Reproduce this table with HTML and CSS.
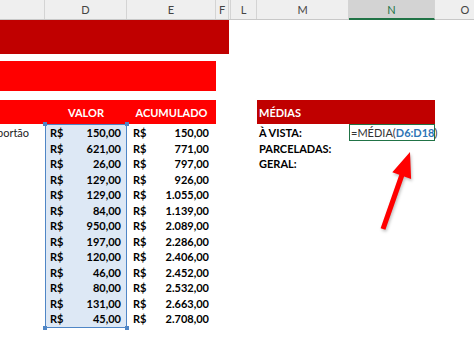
FILE: index.html
```html
<!DOCTYPE html>
<html lang="pt-BR">
<head>
<meta charset="utf-8">
<title>Planilha</title>
<link rel="stylesheet" href="styles.css">
</head>
<body>
<div class="sheet">
  <div class="colheads">
    <div class="ch w-c"></div>
    <div class="ch w-d">D</div>
    <div class="ch w-e">E</div>
    <div class="ch w-f">F</div>
    <div class="ch w-hid"></div>
    <div class="ch w-l">L</div>
    <div class="ch w-m">M</div>
    <div class="ch w-n active">N</div>
    <div class="ch w-o">O</div>
  </div>
  <div class="body">
    <div class="left">
      <div class="bar1"></div>
      <div class="bar2"></div>
      <div class="thead">
        <div class="w-c"></div>
        <div class="w-d th">VALOR</div>
        <div class="w-e th">ACUMULADO</div>
      </div>
      <div class="data">
        <div class="col colc">
          <div class="cell txt">portão</div>
        </div>
        <div class="col cold">
          <div class="cell money"><span>R$</span><span>150,00</span></div>
          <div class="cell money"><span>R$</span><span>621,00</span></div>
          <div class="cell money"><span>R$</span><span>26,00</span></div>
          <div class="cell money"><span>R$</span><span>129,00</span></div>
          <div class="cell money"><span>R$</span><span>129,00</span></div>
          <div class="cell money"><span>R$</span><span>84,00</span></div>
          <div class="cell money"><span>R$</span><span>950,00</span></div>
          <div class="cell money"><span>R$</span><span>197,00</span></div>
          <div class="cell money"><span>R$</span><span>120,00</span></div>
          <div class="cell money"><span>R$</span><span>46,00</span></div>
          <div class="cell money"><span>R$</span><span>80,00</span></div>
          <div class="cell money"><span>R$</span><span>131,00</span></div>
          <div class="cell money"><span>R$</span><span>45,00</span></div>
          <span class="handle tl"></span><span class="handle tr"></span>
          <span class="handle bl"></span><span class="handle br"></span>
        </div>
        <div class="col cole">
          <div class="cell money"><span>R$</span><span>150,00</span></div>
          <div class="cell money"><span>R$</span><span>771,00</span></div>
          <div class="cell money"><span>R$</span><span>797,00</span></div>
          <div class="cell money"><span>R$</span><span>926,00</span></div>
          <div class="cell money"><span>R$</span><span>1.055,00</span></div>
          <div class="cell money"><span>R$</span><span>1.139,00</span></div>
          <div class="cell money"><span>R$</span><span>2.089,00</span></div>
          <div class="cell money"><span>R$</span><span>2.286,00</span></div>
          <div class="cell money"><span>R$</span><span>2.406,00</span></div>
          <div class="cell money"><span>R$</span><span>2.452,00</span></div>
          <div class="cell money"><span>R$</span><span>2.532,00</span></div>
          <div class="cell money"><span>R$</span><span>2.663,00</span></div>
          <div class="cell money"><span>R$</span><span>2.708,00</span></div>
        </div>
      </div>
    </div>
    <div class="right">
      <div class="mhead">MÉDIAS</div>
      <div class="rrow">
        <div class="lbl">À VISTA:</div>
        <div class="fcell">=MÉDIA(<b>D6:D18</b>)</div>
      </div>
      <div class="rrow"><div class="lbl">PARCELADAS:</div></div>
      <div class="rrow"><div class="lbl">GERAL:</div></div>
    </div>
  </div>
  <svg class="arrow" width="474" height="349" viewBox="0 0 474 349">
    <polygon points="380.6,228.2 385.4,229.8 404.1,176.4 411.1,178.9 410,152 392.3,172.3 399.3,174.8" fill="#ff0000"/>
  </svg>
</div>
</body>
</html>
```

FILE: styles.css
```css
* { box-sizing: border-box; }
html, body { margin: 0; padding: 0; background: #ffffff; }
body {
  font-family: Lato, "Liberation Sans", sans-serif;
  font-size: 11px;
  color: #000;
  width: 474px;
  height: 349px;
  overflow: hidden;
}
.sheet { position: relative; width: 474px; height: 349px; overflow: hidden; }

.colheads {
  display: flex;
  height: 20px;
  background: #efefef;
  border-bottom: 1px solid #c8c8c8;
}
.ch {
  flex: none;
  height: 19px;
  line-height: 20px;
  text-align: center;
  color: #444;
  font-size: 11px;
  border-right: 1px solid #d4d4d4;
}
.w-c { width: 45px; flex: none; }
.w-d { width: 82px; flex: none; }
.w-e { width: 89px; flex: none; }
.w-f { width: 13px; }
.w-hid { width: 2px; }
.w-l { width: 26px; }
.w-m { width: 92px; }
.w-n { width: 86px; }
.w-o { width: 60px; border-right: none; }
.ch.active {
  background: #d3d3d3;
  color: #217346;
  border-bottom: 2px solid #217346;
  height: 20px;
}

.body { display: flex; }
.left { width: 229px; flex: none; }
.bar1 { height: 34px; width: 229px; background: #c00000; }
.bar2 { height: 30px; width: 216px; background: #ff0000; margin-top: 7px; }
.thead {
  display: flex;
  height: 24px;
  width: 216px;
  margin-top: 9px;
  background: #ff0000;
}
.th {
  color: #fff;
  font-weight: bold;
  text-align: center;
  line-height: 26px;
  font-size: 11px;
}

.data { display: flex; height: 204px; }
.col {
  display: flex;
  flex-direction: column;
  padding: 1px 0;
}
.colc { width: 45px; overflow: hidden; }
.cold {
  width: 82px;
  position: relative;
  background: #dde8f5;
  border: 1px solid #4f86c6;
  padding: 0;
}
.cole { width: 89px; }
.cell {
  height: 15.54px;
  line-height: 16px;
  white-space: nowrap;
}
.txt { margin-left: -3px; color: #222; }
.money {
  display: flex;
  justify-content: space-between;
  font-weight: bold;
}
.cold .money { padding: 0 5px 0 4px; }
.cole .money { padding: 0 7px 0 6px; }

.handle {
  position: absolute;
  width: 4px;
  height: 4px;
  background: #4f86c6;
}
.tl { left: -3px; top: -3px; }
.tr { right: -3px; top: -3px; }
.bl { left: -3px; bottom: -3px; }
.br { right: -3px; bottom: -3px; }

.right { margin-left: 28px; margin-top: 80px; width: 178px; }
.mhead {
  height: 24px;
  background: #c00000;
  color: #fff;
  font-weight: bold;
  padding-left: 2px;
  line-height: 26px;
}
.rrow {
  display: flex;
  height: 15.54px;
  line-height: 16px;
}
.rrow:first-of-type { margin-top: 1px; }
.mhead + .rrow { margin-top: 1px; }
.lbl { width: 92px; flex: none; font-weight: bold; padding-left: 2px; }
.fcell {
  width: 86px;
  flex: none;
  height: 17px;
  margin-top: -1px;
  border: 1px solid #217346;
  padding-left: 1px;
  line-height: 15px;
  white-space: nowrap;
  color: #333;
  overflow: visible;
}
.fcell b { color: #2e75b6; font-weight: bold; }

.arrow {
  position: absolute;
  left: 0;
  top: 0;
  filter: drop-shadow(1px 2px 1.5px rgba(0,0,0,0.25));
}
```
